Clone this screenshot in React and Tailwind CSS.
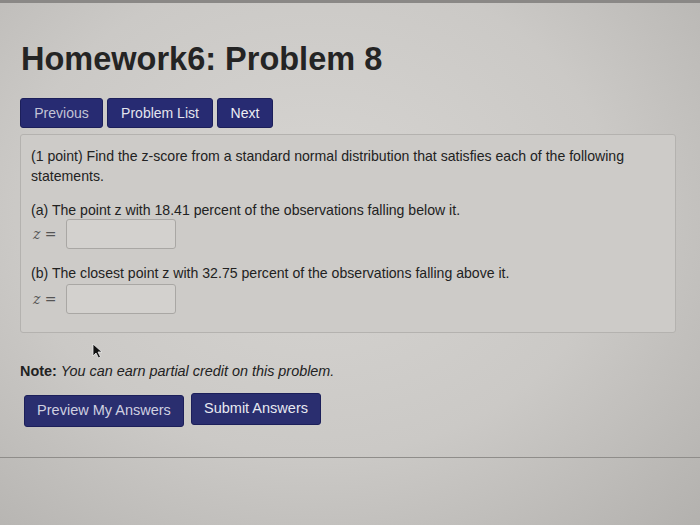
import React from "react";

function Btn({ children, className = "" }) {
  return (
    <button
      className={
        "h-[30px] rounded-[3px] bg-[#272b72] text-[14px] leading-none border border-[#1c1f5a] " +
        className
      }
    >
      {children}
    </button>
  );
}

export default function App() {
  return (
    <div className="w-[700px] h-[525px] relative overflow-hidden border-t-[3px] border-[#8a8886] bg-[radial-gradient(ellipse_at_45%_40%,#d7d5d2_0%,#cbc9c6_55%,#b3b1ae_100%)] font-['Liberation_Sans',Arial,sans-serif] text-[#222]">
      <div className="px-5 pt-9">
        <h1 className="text-[32.5px] font-bold leading-[38px] text-[#242424] pl-[1px] pt-[1px]">
          Homework6: Problem 8
        </h1>
        <div className="mt-[20px] flex gap-1">
          <Btn className="w-[83px] text-[#c3c4d6]">Previous</Btn>
          <Btn className="w-[106px] text-[#e4e5ee]">Problem List</Btn>
          <Btn className="w-[56px] text-[#eeeef4]">Next</Btn>
        </div>
        <div className="mt-[6px] w-[656px] rounded-[3px] border border-[#b4b2af] bg-[#cdcbc8] pl-[10px] pr-8 pt-[11px] pb-[18px] text-[14.1px]">
          <p className="leading-[20px]">
            (1 point) Find the z-score from a standard normal distribution that satisfies each of the following statements.
          </p>
          <p className="mt-[15px] leading-[18px]">
            (a) The point z with 18.41 percent of the observations falling below it.
          </p>
          <div className="flex items-center gap-[9px] pl-[2px]">
            <span className="text-[#555] text-[14px] font-['DejaVu_Serif',serif] italic">z =</span>
            <div className="w-[110px] h-[30px] rounded-[3px] border border-[#a9a7a4] bg-[#d3d1ce]" />
          </div>
          <p className="mt-[15px] leading-[18px]">
            (b) The closest point z with 32.75 percent of the observations falling above it.
          </p>
          <div className="mt-[2px] flex items-center gap-[9px] pl-[2px]">
            <span className="text-[#555] text-[14px] font-['DejaVu_Serif',serif] italic">z =</span>
            <div className="w-[110px] h-[30px] rounded-[3px] border border-[#a9a7a4] bg-[#d3d1ce]" />
          </div>
        </div>
        <p className="mt-[28px] text-[14.4px] leading-[20px]">
          <span className="font-bold">Note:</span>{" "}
          <span className="italic">You can earn partial credit on this problem.</span>
        </p>
        <div className="mt-[12px] flex items-start gap-[7px] pl-1">
          <button className="mt-[2px] h-[32px] w-[160px] rounded-[3px] bg-[#2a2e6f] border border-[#1c1f5a] text-[14.5px] text-[#cfd0e0]">
            Preview My Answers
          </button>
          <button className="h-[32px] w-[130px] rounded-[3px] bg-[#2a2e6f] border border-[#1c1f5a] text-[14.5px] text-[#e8e9f1]">
            Submit Answers
          </button>
        </div>
      </div>
      <div className="mt-[30px] border-t border-[#8f8d8a]" />
      <svg
        className="absolute left-[92px] top-[340px]"
        width="12"
        height="16"
        viewBox="0 0 12 16"
      >
        <path d="M1 1 L1 13 L4 10 L6.5 15 L8.5 14 L6 9 L10 9 Z" fill="#111" stroke="#eee" strokeWidth="0.8" />
      </svg>
    </div>
  );
}
